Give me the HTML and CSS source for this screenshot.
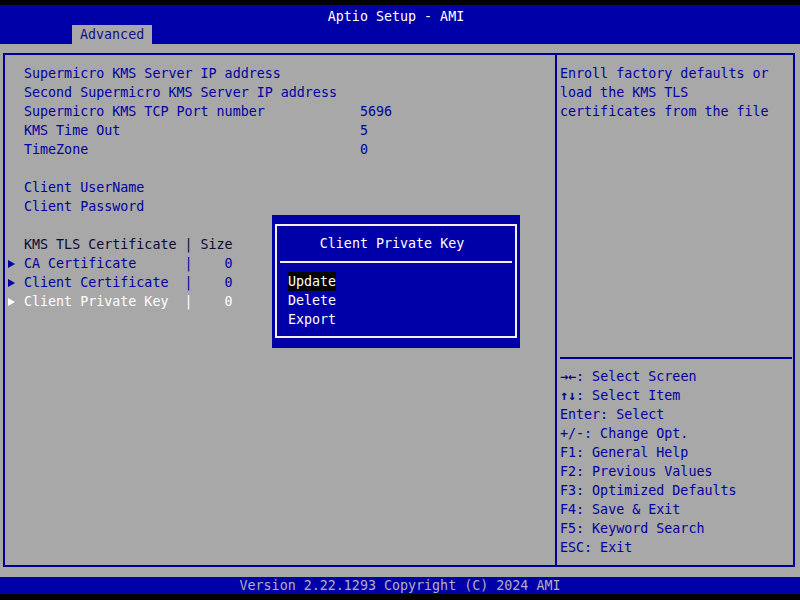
FILE: index.html
```html
<!DOCTYPE html>
<html lang="en">
<head>
    <meta charset="utf-8">
    <title>Aptio Setup - AMI</title>
    <link rel="stylesheet" href="styles.css">
</head>

<body>
    <div class="screen">
        <header class="top">
            <div class="title">Aptio Setup - AMI</div>
            <nav class="tabs"><span class="tab">Advanced</span></nav>
        </header>

        <main class="main">
            <div class="frame">
                <section class="setup">
                    <div class="row"><span class="mark"></span><span>Supermicro KMS Server IP address</span></div>
                    <div class="row"><span class="mark"></span><span>Second Supermicro KMS Server IP address</span></div>
                    <div class="row"><span class="mark"></span><span>Supermicro KMS TCP Port number</span><span class="value">5696</span></div>
                    <div class="row"><span class="mark"></span><span>KMS Time Out</span><span class="value">5</span></div>
                    <div class="row"><span class="mark"></span><span>TimeZone</span><span class="value">0</span></div>
                    <div class="row"></div>
                    <div class="row"><span class="mark"></span><span>Client UserName</span></div>
                    <div class="row"><span class="mark"></span><span>Client Password</span></div>
                    <div class="row"></div>
                    <div class="row static"><span class="mark"></span><span>KMS TLS Certificate | Size</span></div>
                    <div class="row sub"><span class="mark"></span><span>CA Certificate      |    0</span></div>
                    <div class="row sub"><span class="mark"></span><span>Client Certificate  |    0</span></div>
                    <div class="row sub selected"><span class="mark"></span><span>Client Private Key  |    0</span></div>
                </section>

                <aside class="help">
                    <div class="help-text">
                        <div>Enroll factory defaults or</div>
                        <div>load the KMS TLS</div>
                        <div>certificates from the file</div>
                    </div>
                    <div class="keys">
                        <div><b>&rarr;&larr;</b>: Select Screen</div>
                        <div><b>&uarr;&darr;</b>: Select Item</div>
                        <div>Enter: Select</div>
                        <div>+/-: Change Opt.</div>
                        <div>F1: General Help</div>
                        <div>F2: Previous Values</div>
                        <div>F3: Optimized Defaults</div>
                        <div>F4: Save &amp; Exit</div>
                        <div>F5: Keyword Search</div>
                        <div>ESC: Exit</div>
                    </div>
                </aside>
            </div>

            <!-- popup menu over the setup page -->
            <div class="popup">
                <div class="popup-box">
                    <div class="popup-title">Client Private Key</div>
                    <div class="popup-sep"></div>
                    <div class="popup-item"><span class="hl">Update</span></div>
                    <div class="popup-item"><span>Delete</span></div>
                    <div class="popup-item"><span>Export</span></div>
                </div>
            </div>
        </main>

        <footer class="bottom">Version 2.22.1293 Copyright (C) 2024 AMI</footer>
    </div>
</body>

</html>
```

FILE: styles.css
```css
:root {
    --blue: #0000a8;
    --gray: #a8a8a8;
    --line: #000090;
    --text: #0000a0;
}

* {
    box-sizing: border-box;
}

body {
    margin: 0;
    background: #000;
    font-family: "DejaVu Sans Mono", "Liberation Mono", monospace;
    font-size: 13.33px;
    line-height: 19px;
}

.screen {
    width: 800px;
    height: 600px;
    padding: 5px 0 6px;
    display: flex;
    flex-direction: column;
}

.top {
    height: 39px;
    background: var(--blue);
    display: flex;
    flex-direction: column;
}

.title {
    height: 20px;
    padding: 2px 8px 0 0;
    text-align: center;
    color: #fff;
}

.tabs {
    display: flex;
    padding-left: 72px;
}

.tab {
    height: 19px;
    padding: 0 8px;
    background: var(--gray);
    color: #10108a;
}

.main {
    flex: 1;
    position: relative;
    padding: 9px 5px 10px 3px;
    background: var(--gray);
}

.frame {
    height: 100%;
    display: flex;
    border: 2px solid var(--line);
}

.setup {
    width: 550px;
    padding-top: 9px;
    color: var(--text);
}

.row {
    display: grid;
    grid-template-columns: 19px 336px auto;
    height: 19px;
    white-space: pre;
}

.row.static {
    color: #0a0a30;
}

.row.selected {
    color: #fff;
}

.sub .mark::before {
    content: "";
    display: block;
    width: 0;
    margin: 6px 0 0 3px;
    border-left: 7px solid currentColor;
    border-top: 4px solid transparent;
    border-bottom: 4px solid transparent;
}

.help {
    flex: 1;
    display: flex;
    flex-direction: column;
    padding: 9px 0 8px 3px;
    border-left: 2px solid var(--line);
    color: var(--text);
}

.keys {
    margin: auto 1px 0 0;
    padding-top: 8px;
    border-top: 2px solid var(--line);
}

.keys b {
    color: #000080;
}

.popup {
    position: absolute;
    left: 272px;
    top: 171px;
    width: 248px;
    height: 133px;
    padding: 9px 3px 10px;
    background: var(--blue);
}

.popup-box {
    height: 100%;
    padding: 8px 0 7px;
    border: 2px solid #f0f0f0;
    color: #fff;
}

.popup-title {
    padding-right: 8px;
    text-align: center;
}

.popup-sep {
    height: 19px;
    padding: 8px 3px 0;
}

.popup-sep::before {
    content: "";
    display: block;
    border-top: 2px solid #f0f0f0;
}

.popup-item {
    height: 19px;
    padding-left: 11px;
}

.popup-item span {
    display: inline-block;
    height: 19px;
}

.popup-item .hl {
    background: #000;
}

.bottom {
    height: 17px;
    padding-top: 1px;
    line-height: 16px;
    background: var(--blue);
    color: #b0b0c0;
    text-align: center;
}
```
